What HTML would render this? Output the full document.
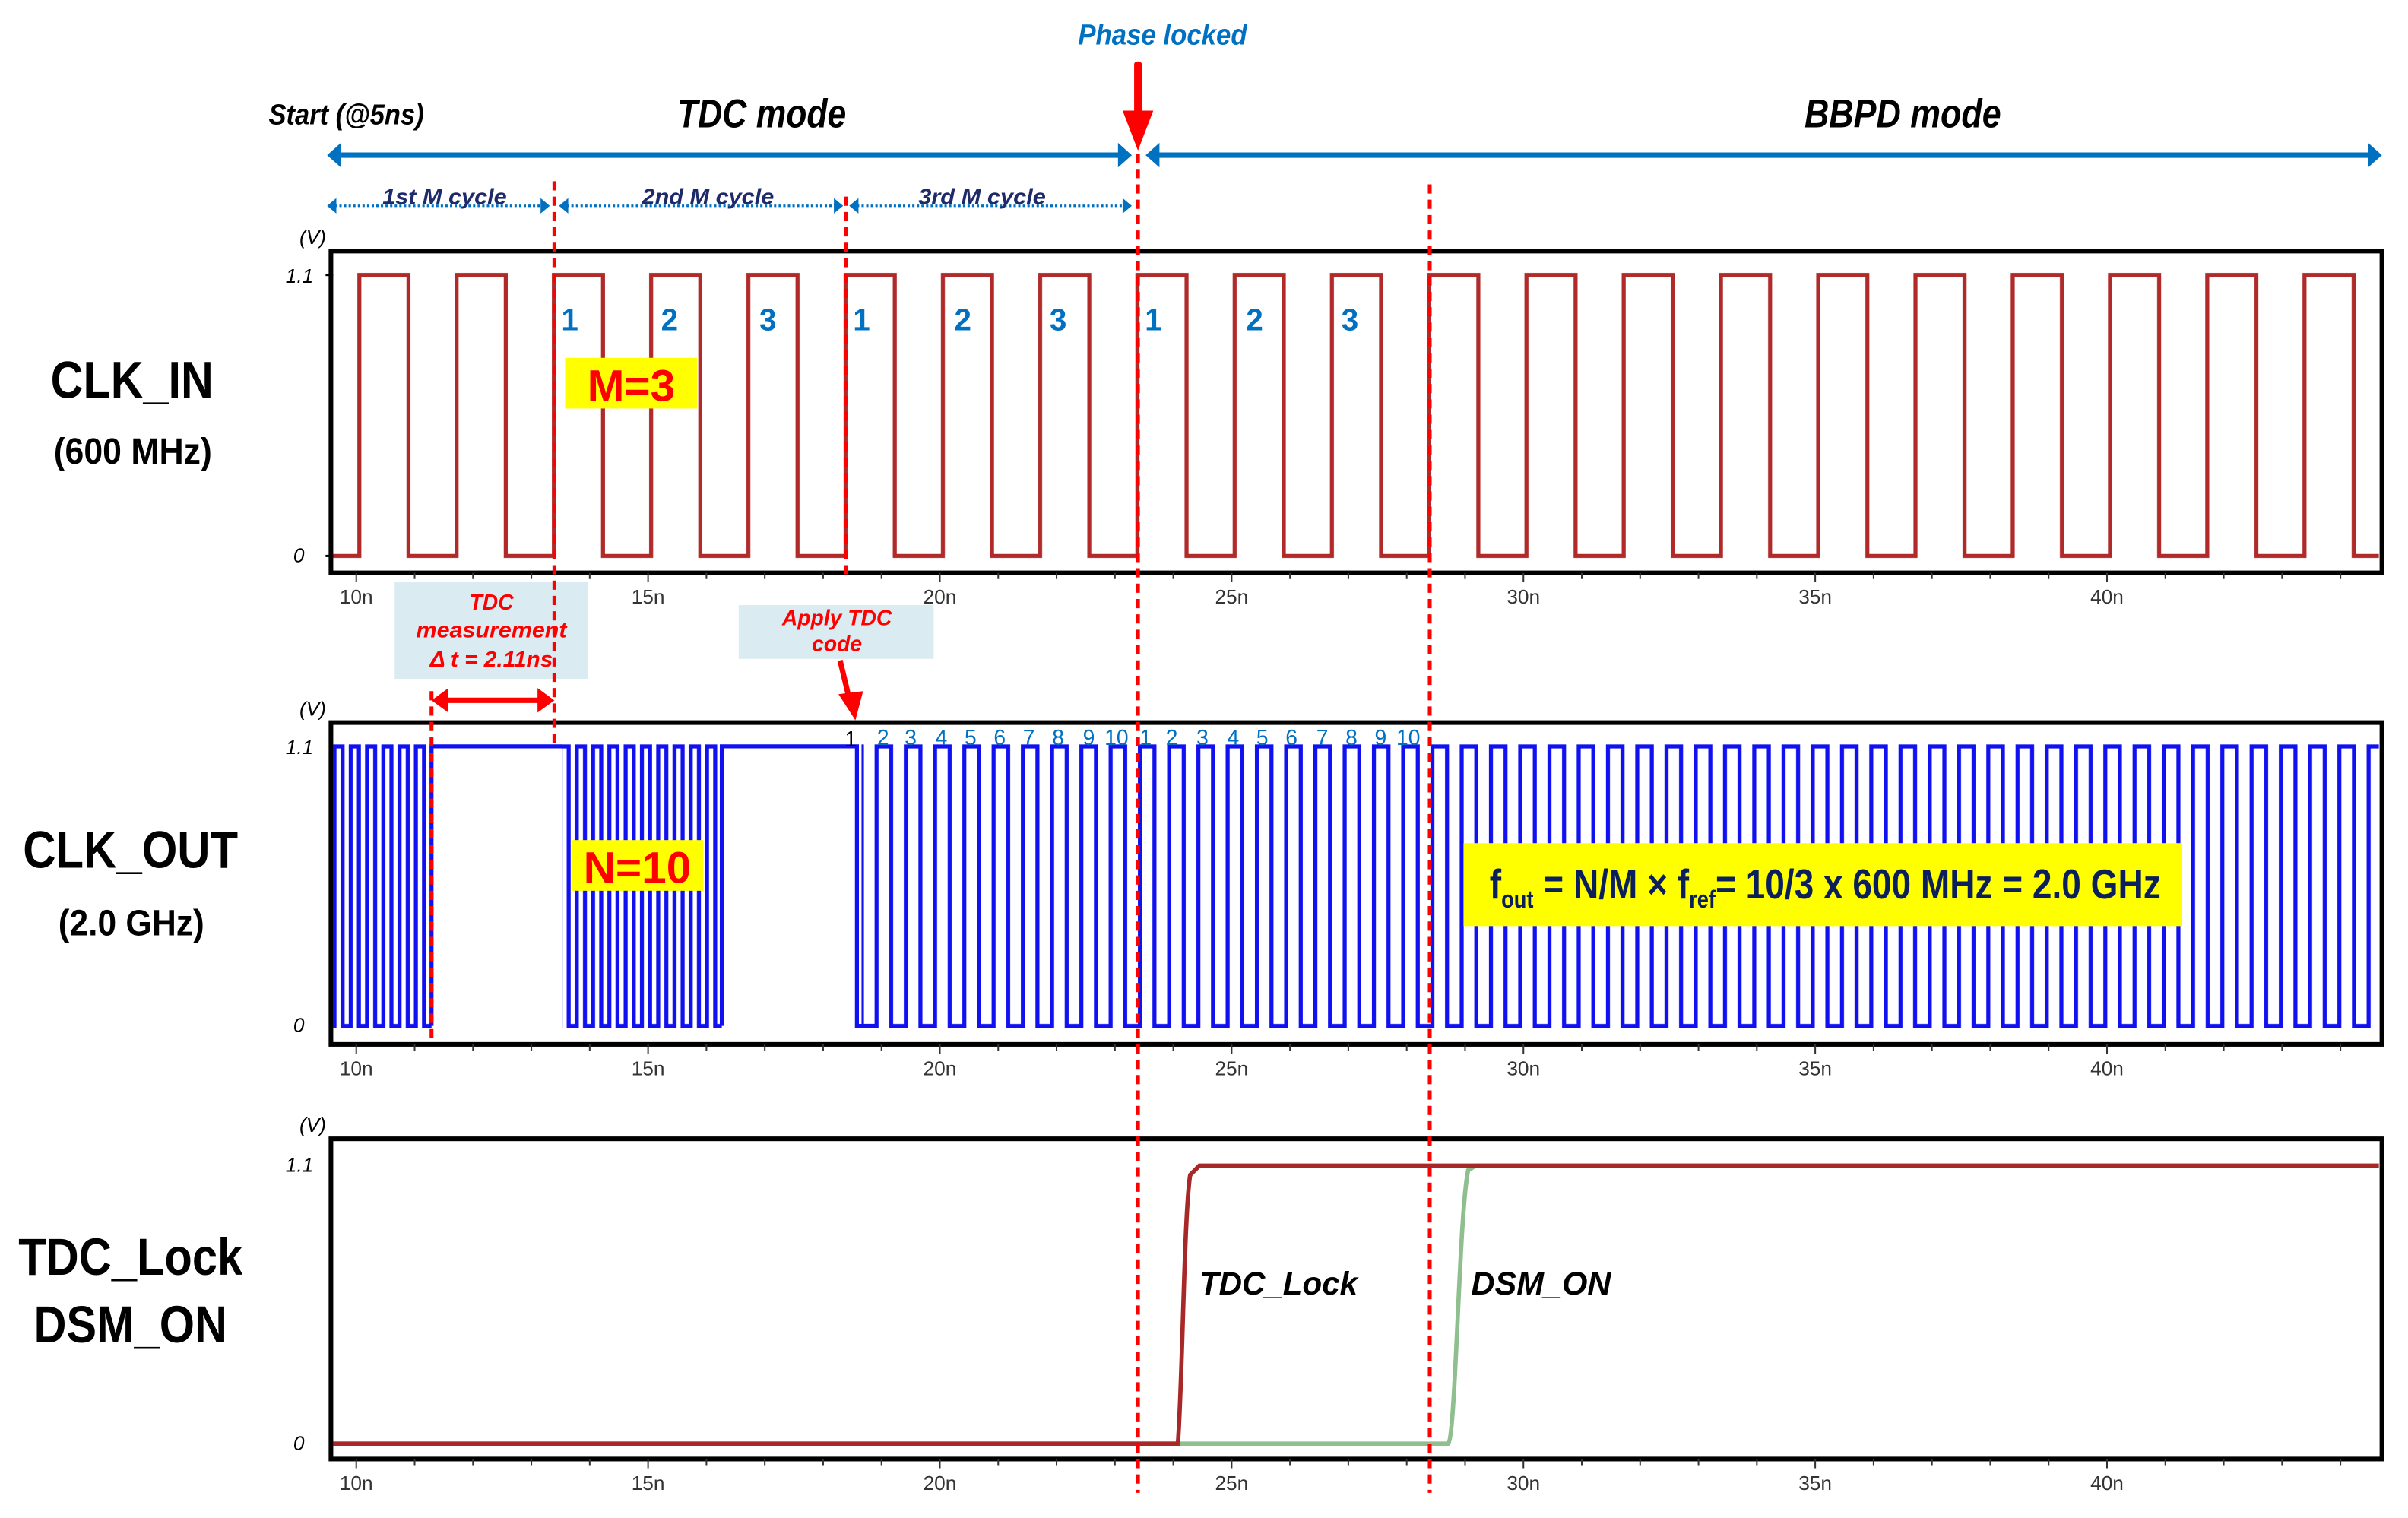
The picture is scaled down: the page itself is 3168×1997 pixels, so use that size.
<!DOCTYPE html>
<html><head><meta charset="utf-8"><style>
html,body{margin:0;padding:0;background:#fff;}
svg{display:block;}
text{font-family:"Liberation Sans Narrow","Liberation Sans",sans-serif;}
.ax{font-family:"DejaVu Sans","Liberation Sans",sans-serif;font-size:13px;fill:#333;}
.yl{font-family:"Liberation Sans",sans-serif;font-style:italic;font-size:13px;fill:#000;}
.big{font-weight:bold;font-size:34px;fill:#000;}
.sub{font-weight:bold;font-size:24px;fill:#000;}
.bi{font-weight:bold;font-style:italic;}
.num{font-family:"DejaVu Sans","Liberation Sans",sans-serif;fill:#0070c0;}
</style></head><body>
<svg width="3168" height="1997" viewBox="0 0 1568 988.4" preserveAspectRatio="none" xmlns="http://www.w3.org/2000/svg">
<defs>
<pattern id="pin" patternUnits="userSpaceOnUse" x="224" y="0" width="63.33" height="988">
<path d="M0,362 H10 V179 H42 V362 H63.33" fill="none" stroke="#b02a2a" stroke-width="2.6"/>
</pattern>
<pattern id="po1" patternUnits="userSpaceOnUse" x="215.8" y="0" width="10.6" height="988">
<path d="M0,668 H2 V486 H7.3 V668 H10.6" fill="none" stroke="#1010f0" stroke-width="2.6"/>
</pattern>
<pattern id="po2" patternUnits="userSpaceOnUse" x="363" y="0" width="10.6" height="988">
<path d="M0,668 H2 V486 H7.3 V668 H10.6" fill="none" stroke="#1010f0" stroke-width="2.6"/>
</pattern>
<pattern id="po3" patternUnits="userSpaceOnUse" x="566.8" y="0" width="19.05" height="988">
<path d="M0,668 H4 V486 H13.5 V668 H19.05" fill="none" stroke="#1010f0" stroke-width="2.6"/>
</pattern>
</defs>

<text x="757" y="29" text-anchor="middle" class="bi" font-size="19" fill="#0070c0" textLength="110" lengthAdjust="spacingAndGlyphs">Phase locked</text>
<rect x="738.5" y="40" width="5" height="36" rx="2" fill="#ff0000"/>
<polygon points="731,72 751,72 741,98" fill="#ff0000"/>
<text x="175" y="81" class="bi" font-size="19" fill="#000" textLength="101" lengthAdjust="spacingAndGlyphs">Start (@5ns)</text>
<text x="441" y="83" class="bi" font-size="26" fill="#000" textLength="110" lengthAdjust="spacingAndGlyphs">TDC mode</text>
<text x="1175" y="83" class="bi" font-size="26" fill="#000" textLength="128" lengthAdjust="spacingAndGlyphs">BBPD mode</text>
<g fill="#0070c0" stroke="#0070c0">
<line x1="220" y1="101" x2="730" y2="101" stroke-width="3.5"/>
<polygon points="213,101 222,93 222,109" stroke="none"/>
<polygon points="737,101 728,93 728,109" stroke="none"/>
<line x1="754" y1="101" x2="1544" y2="101" stroke-width="3.5"/>
<polygon points="746,101 755,93 755,109" stroke="none"/>
<polygon points="1551,101 1542,93 1542,109" stroke="none"/>
<g stroke-width="1.6" stroke-dasharray="1.5,1.5">
<line x1="218" y1="134" x2="354" y2="134"/>
<line x1="369" y1="134" x2="545" y2="134"/>
<line x1="558" y1="134" x2="733" y2="134"/>
</g>
<g stroke="none">
<polygon points="213,134 219,129 219,139"/><polygon points="358,134 352,129 352,139"/>
<polygon points="364,134 370,129 370,139"/><polygon points="549,134 543,129 543,139"/>
<polygon points="553,134 559,129 559,139"/><polygon points="737,134 731,129 731,139"/>
</g>
</g>
<g class="bi" font-size="14" fill="#1f2a6b">
<text x="249" y="133" textLength="81" lengthAdjust="spacingAndGlyphs">1st M cycle</text>
<text x="418" y="133" textLength="86" lengthAdjust="spacingAndGlyphs">2nd M cycle</text>
<text x="598" y="133" textLength="83" lengthAdjust="spacingAndGlyphs">3rd M cycle</text>
</g>

<text x="33" y="259" class="big" textLength="106" lengthAdjust="spacingAndGlyphs">CLK_IN</text>
<text x="35" y="302" class="sub" textLength="103" lengthAdjust="spacingAndGlyphs">(600 MHz)</text>
<text x="15" y="565" class="big" textLength="140" lengthAdjust="spacingAndGlyphs">CLK_OUT</text>
<text x="38" y="609" class="sub" textLength="95" lengthAdjust="spacingAndGlyphs">(2.0 GHz)</text>
<text x="12" y="830" class="big" textLength="146" lengthAdjust="spacingAndGlyphs">TDC_Lock</text>
<text x="22" y="874" class="big" textLength="126" lengthAdjust="spacingAndGlyphs">DSM_ON</text>

<rect x="217" y="170" width="1332" height="198" fill="url(#pin)"/>
<rect x="215.5" y="163.5" width="1335.5" height="209.5" fill="none" stroke="#000" stroke-width="3"/>
<text x="195" y="159" class="yl">(V)</text>
<text x="186" y="184" class="yl">1.1</text>
<text x="191" y="366" class="yl">0</text>
<line x1="212" y1="179" x2="217" y2="179" stroke="#000" stroke-width="1.5"/>
<line x1="212" y1="362" x2="217" y2="362" stroke="#000" stroke-width="1.5"/>

<rect x="217" y="475" width="64" height="200" fill="url(#po1)"/>
<rect x="366" y="475" width="104" height="200" fill="url(#po2)"/>
<rect x="561" y="475" width="988" height="200" fill="url(#po3)"/>
<path d="M281,668 V486 H366 M470,668 V486 H558 V668 H571" fill="none" stroke="#1010f0" stroke-width="2.6"/>
<rect x="215.5" y="470.5" width="1335.5" height="209.5" fill="none" stroke="#000" stroke-width="3"/>
<text x="195" y="466" class="yl">(V)</text>
<text x="186" y="491" class="yl">1.1</text>
<text x="191" y="672" class="yl">0</text>

<path d="M217,940 H943 C948,935 950,790 956,762 L961,759 H1549" fill="none" stroke="#8fbf8f" stroke-width="2.8"/>
<path d="M217,940 H767 C770,900 771,790 775,765 L781,759 H1549" fill="none" stroke="#a82828" stroke-width="2.8"/>
<rect x="215.5" y="741.5" width="1335.5" height="208.5" fill="none" stroke="#000" stroke-width="3"/>
<text x="195" y="737" class="yl">(V)</text>
<text x="186" y="763" class="yl">1.1</text>
<text x="191" y="944" class="yl">0</text>
<text x="781" y="843" class="bi" font-size="21" fill="#000" textLength="103" lengthAdjust="spacingAndGlyphs">TDC_Lock</text>
<text x="958" y="843" class="bi" font-size="21" fill="#000" textLength="91" lengthAdjust="spacingAndGlyphs">DSM_ON</text>

<g stroke="#333" stroke-width="1">
<path d="M232,373v6M270,373v4M308,373v4M346,373v4M384,373v4M422,373v6M460,373v4M498,373v4M536,373v4M574,373v4M612,373v6M650,373v4M688,373v4M726,373v4M764,373v4M802,373v6M840,373v4M878,373v4M916,373v4M954,373v4M992,373v6M1030,373v4M1068,373v4M1106,373v4M1144,373v4M1182,373v6M1220,373v4M1258,373v4M1296,373v4M1334,373v4M1372,373v6M1410,373v4M1448,373v4M1486,373v4M1524,373v4"/>
<path transform="translate(0,307)" d="M232,373v6M270,373v4M308,373v4M346,373v4M384,373v4M422,373v6M460,373v4M498,373v4M536,373v4M574,373v4M612,373v6M650,373v4M688,373v4M726,373v4M764,373v4M802,373v6M840,373v4M878,373v4M916,373v4M954,373v4M992,373v6M1030,373v4M1068,373v4M1106,373v4M1144,373v4M1182,373v6M1220,373v4M1258,373v4M1296,373v4M1334,373v4M1372,373v6M1410,373v4M1448,373v4M1486,373v4M1524,373v4"/>
<path transform="translate(0,577)" d="M232,373v6M270,373v4M308,373v4M346,373v4M384,373v4M422,373v6M460,373v4M498,373v4M536,373v4M574,373v4M612,373v6M650,373v4M688,373v4M726,373v4M764,373v4M802,373v6M840,373v4M878,373v4M916,373v4M954,373v4M992,373v6M1030,373v4M1068,373v4M1106,373v4M1144,373v4M1182,373v6M1220,373v4M1258,373v4M1296,373v4M1334,373v4M1372,373v6M1410,373v4M1448,373v4M1486,373v4M1524,373v4"/>
</g>
<g class="ax" text-anchor="middle">
<text x="232" y="393">10n</text><text x="422" y="393">15n</text><text x="612" y="393">20n</text><text x="802" y="393">25n</text><text x="992" y="393">30n</text><text x="1182" y="393">35n</text><text x="1372" y="393">40n</text>
<text x="232" y="700">10n</text><text x="422" y="700">15n</text><text x="612" y="700">20n</text><text x="802" y="700">25n</text><text x="992" y="700">30n</text><text x="1182" y="700">35n</text><text x="1372" y="700">40n</text>
<text x="232" y="970">10n</text><text x="422" y="970">15n</text><text x="612" y="970">20n</text><text x="802" y="970">25n</text><text x="992" y="970">30n</text><text x="1182" y="970">35n</text><text x="1372" y="970">40n</text>
</g>

<g class="num" font-size="20" font-weight="bold" text-anchor="middle">
<text x="371" y="215">1</text><text x="436" y="215">2</text><text x="500" y="215">3</text>
<text x="561" y="215">1</text><text x="627" y="215">2</text><text x="689" y="215">3</text>
<text x="751" y="215">1</text><text x="817" y="215">2</text><text x="879" y="215">3</text>
</g>
<g class="num" font-size="14" text-anchor="middle">
<text x="554" y="486" fill="#000">1</text>
<text x="575" y="485">2</text><text x="593" y="485">3</text><text x="613" y="485">4</text><text x="632" y="485">5</text><text x="651" y="485">6</text><text x="670" y="485">7</text><text x="689" y="485">8</text><text x="709" y="485">9</text><text x="727" y="485">10</text>
<text x="746" y="485">1</text><text x="763" y="485">2</text><text x="783" y="485">3</text><text x="803" y="485">4</text><text x="822" y="485">5</text><text x="841" y="485">6</text><text x="861" y="485">7</text><text x="880" y="485">8</text><text x="899" y="485">9</text><text x="917" y="485">10</text>
</g>

<rect x="368" y="233" width="86" height="33" fill="#ffff00"/>
<text x="411" y="261" text-anchor="middle" font-size="29" font-weight="bold" fill="#ff0000">M=3</text>
<rect x="372" y="547" width="86" height="33" fill="#ffff00"/>
<text x="415" y="575" text-anchor="middle" font-size="29" font-weight="bold" fill="#ff0000">N=10</text>
<rect x="953" y="549" width="468" height="54" fill="#ffff00"/>
<text x="970" y="585" font-size="27" font-weight="bold" fill="#0a1f5c" textLength="437" lengthAdjust="spacingAndGlyphs">f<tspan font-size="16" dy="6">out</tspan><tspan dy="-6"> = N/M × f</tspan><tspan font-size="16" dy="6">ref</tspan><tspan dy="-6">= 10/3 x 600 MHz = 2.0 GHz</tspan></text>

<rect x="257" y="379" width="126" height="63" fill="#daebf2"/>
<g class="bi" font-size="14" fill="#ff0000" text-anchor="middle">
<text x="320" y="397">TDC</text>
<text x="320" y="415" textLength="98" lengthAdjust="spacingAndGlyphs">measurement</text>
<text x="320" y="434" textLength="80" lengthAdjust="spacingAndGlyphs">Δ t = 2.11ns</text>
</g>
<rect x="481" y="394" width="127" height="35" fill="#daebf2"/>
<g class="bi" font-size="14" fill="#ff0000" text-anchor="middle">
<text x="545" y="407">Apply TDC</text>
<text x="545" y="424">code</text>
</g>
<line x1="547" y1="430" x2="553" y2="455" stroke="#ff0000" stroke-width="3.5"/>
<polygon points="546,452 562,450 557,469" fill="#ff0000"/>
<line x1="288" y1="456" x2="354" y2="456" stroke="#ff0000" stroke-width="3.5"/>
<polygon points="281,456 292,448 292,464" fill="#ff0000"/>
<polygon points="361,456 350,448 350,464" fill="#ff0000"/>

<g stroke="#ff0000" stroke-width="2.5" stroke-dasharray="6,4" fill="none">
<line x1="361" y1="118" x2="361" y2="484"/>
<line x1="551" y1="128" x2="551" y2="378"/>
<line x1="741" y1="100" x2="741" y2="972"/>
<line x1="931" y1="120" x2="931" y2="972"/>
<line x1="281" y1="450" x2="281" y2="680"/>
</g>
</svg>
</body></html>
